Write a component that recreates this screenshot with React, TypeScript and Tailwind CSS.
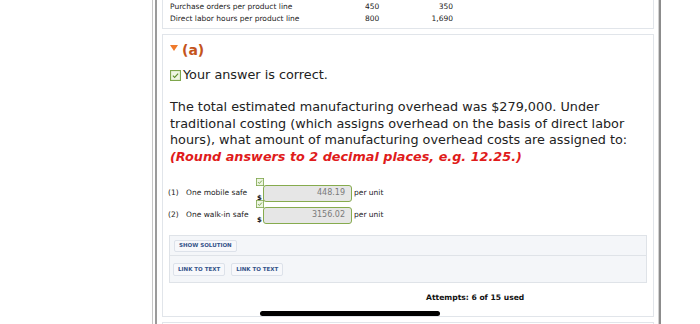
const rows = [
  { label: "Purchase orders per product line", a: "450", b: "350" },
  { label: "Direct labor hours per product line", a: "800", b: "1,690" },
];

const answers = [
  { num: "(1)", label: "One mobile safe", value: "448.19" },
  { num: "(2)", label: "One walk-in safe", value: "3156.02" },
];

function CheckBox({ size }: { size: number }) {
  return (
    <svg width={size} height={size} viewBox="0 0 10 10" fill="none">
      <rect x="0.5" y="0.5" width="9" height="9" fill="#eef6e2" stroke="#7ea64c" />
      <path d="M2.6 5.2l1.6 1.6 3.2-3.6" stroke="#5d8f2c" strokeWidth="1" fill="none" />
    </svg>
  );
}

export default function App() {
  return (
    <div className="relative flex w-[700px] h-[324px] overflow-hidden bg-white font-['DejaVu_Sans',Verdana,sans-serif] text-[#222]">
      <div className="w-[152px] shrink-0" />

      {/* frame lines, left */}
      <div className="w-px shrink-0 bg-[#c6c6c6]" />
      <div className="w-[2px] shrink-0 bg-white" />
      <div className="w-[2px] shrink-0 bg-[#9b9b9b]" />

      <div className="flex w-[501px] shrink-0 flex-col pl-[5px] pr-[4px]">
        {/* data table, scrolled off the top */}
        <div className="h-[29px] shrink-0 border-x border-b border-[#e1e5ea] pl-[7px] pt-px text-[7.5px]">
          {rows.map((r) => (
            <div key={r.label} className="flex h-[12px] items-center">
              <span className="w-[195px]">{r.label}</span>
              <span className="w-[60px]">{r.a}</span>
              <span className="w-[28px] text-right">{r.b}</span>
            </div>
          ))}
        </div>

        {/* part (a) */}
        <div className="mt-[5px] flex h-[283px] shrink-0 flex-col border border-[#e1e5ea]">
          <div className="mt-[7px] flex h-[16px] items-center pl-[7px]">
            <svg width="8" height="6" viewBox="0 0 8 6" className="-mt-[5px] mr-[4px]">
              <path d="M0 0h8L4 6z" fill="#ef7a2c" />
            </svg>
            <span className="text-[14px] font-bold text-[#c4541c]">(a)</span>
          </div>

          <div className="mt-[11px] flex h-[12px] items-center pl-[7px] text-[12.8px]">
            <CheckBox size={11} />
            <span className="ml-[2px]">Your answer is correct.</span>
          </div>

          <p className="mt-[18px] pl-[7px] text-[12.8px] leading-[16.5px]">
            The total estimated manufacturing overhead was $279,000. Under
            <br />
            traditional costing (which assigns overhead on the basis of direct labor
            <br />
            hours), what amount of manufacturing overhead costs are assigned to:
            <br />
            <span className="font-bold italic text-[#e01b1b]">
              (Round answers to 2 decimal places, e.g. 12.25.)
            </span>
          </p>

          <div className="mt-[17px] flex flex-col pl-[5px] text-[7.5px]">
            {answers.map((a) => (
              <div key={a.num} className="flex h-[22px] items-center">
                <span className="w-[18px]">{a.num}</span>
                <span className="w-[71px]">{a.label}</span>
                <div className="relative flex items-center">
                  <span className="absolute -left-px -top-[7px]">
                    <CheckBox size={8} />
                  </span>
                  <span className="absolute left-0 top-[8px] text-[7px] font-bold">$</span>
                  <div className="ml-[6px] flex h-[17px] w-[89px] items-center justify-end rounded-[3px] border-[1.5px] border-[#86ab4e] bg-[#e6e6e6] pr-[6px] text-[8px] text-[#7a7a7a]">
                    {a.value}
                  </div>
                </div>
                <span className="ml-[2px]">per unit</span>
              </div>
            ))}
          </div>

          <div className="mx-[6px] mt-[9px] flex flex-col border border-[#dfe3e8] bg-[#f4f6f9]">
            <div className="flex h-[20px] items-center border-b border-[#dfe3e8] pl-[4px]">
              <span className="flex h-[12px] items-center rounded-[2px] border border-[#dde2ea] bg-[#f7f8fb] px-[4px] text-[5.5px] font-bold text-[#34538a]">
                SHOW SOLUTION
              </span>
            </div>
            <div className="flex h-[26px] items-center gap-[6px] pl-[3px]">
              {["LINK TO TEXT", "LINK TO TEXT"].map((t, i) => (
                <span
                  key={i}
                  className="flex h-[13px] items-center rounded-[2px] border border-[#dde2ea] bg-[#f7f8fb] px-[4px] text-[5.5px] font-bold text-[#34538a]"
                >
                  {t}
                </span>
              ))}
            </div>
          </div>

          <div className="mt-[9px] flex h-[12px] items-center pl-[263px] text-[7.6px] font-bold text-[#111]">
            Attempts: 6 of 15 used
          </div>
        </div>

        <div className="mt-[5px] h-[4px] border-x border-t border-[#e1e5ea]" />
      </div>

      {/* frame lines, right */}
      <div className="w-px shrink-0 bg-[#d2d2d2]" />
      <div className="w-[2px] shrink-0 bg-[#8c8c8c]" />

      {/* home indicator */}
      <div className="absolute left-[260px] top-[311px] h-[5px] w-[180px] rounded-full bg-black" />
    </div>
  );
}
